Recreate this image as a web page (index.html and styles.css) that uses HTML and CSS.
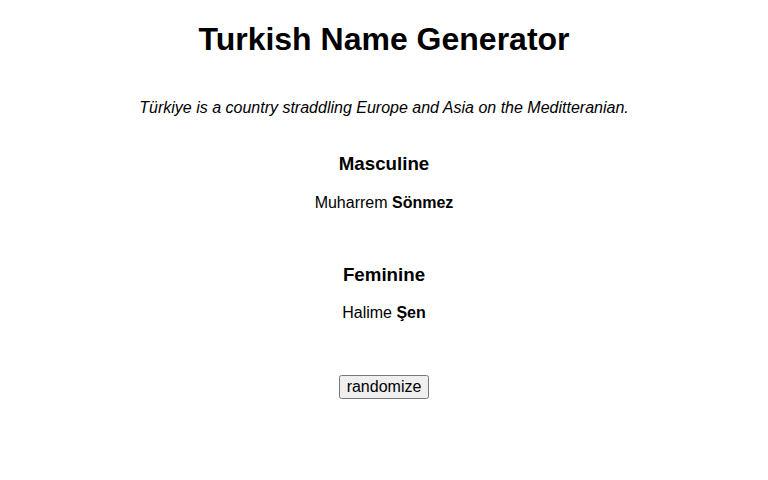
FILE: index.html
```html
<!DOCTYPE html>
<html lang="en">
<head>
    <meta charset="UTF-8">
    <meta name="viewport" content="width=device-width, initial-scale=1.0">
    <title>Turkish Name Generator</title>
    <link rel="stylesheet" href="styles.css">
</head>
<body>

    <h1>Turkish Name Generator</h1>

    <p class="intro">Türkiye is a country straddling Europe and Asia on the Meditteranian.</p>

    <div class="group">
        <h3>Masculine</h3>
        <p class="name">Muharrem <b>Sönmez</b></p>
    </div>

    <div class="group">
        <h3>Feminine</h3>
        <p class="name">Halime <b>Şen</b></p>
    </div>

    <div class="actions">
        <button class="randomize">randomize</button>
    </div>

</body>
</html>
```

FILE: styles.css
```css
body {
    font-family: "Liberation Sans", Arial, sans-serif;
    color: #000;
    background: #fff;
    text-align: center;
    margin: 0;
}
h1 {
    font-size: 32px;
    margin: 21px 0 41px;
}
.intro {
    font-style: italic;
    margin: 0 0 36px;
}
.group {
    margin-bottom: 52px;
}
h3 {
    font-size: 18.72px;
    margin: 0 0 18.5px;
}
.name {
    margin: 0;
}
.actions {
    padding-top: 1px;
}
.randomize {
    font-family: "Liberation Sans", Arial, sans-serif;
    font-size: 16px;
}
```
